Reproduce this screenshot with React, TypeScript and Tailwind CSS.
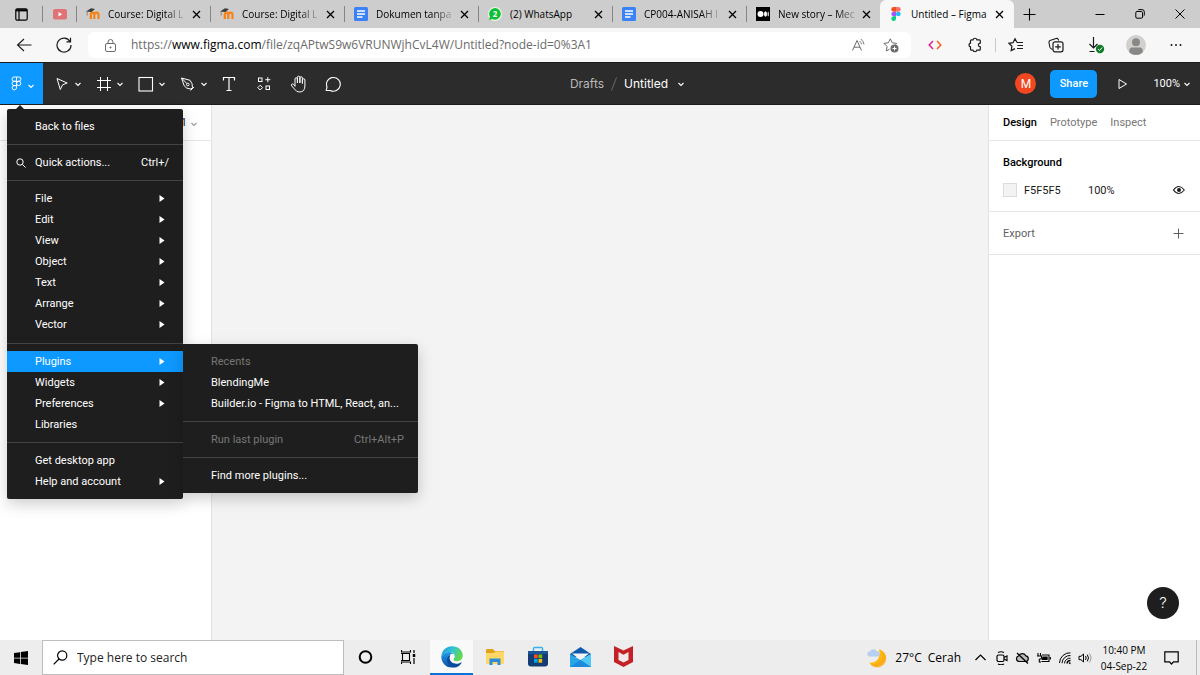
import React from "react";

type IconProps = { w?: number; h?: number; box?: string; className?: string; children: React.ReactNode };

function Icon({ w = 16, h, box, className = "", children }: IconProps) {
  const height = h ?? w;
  return (
    <svg
      width={w}
      height={height}
      viewBox={box ?? `0 0 ${w} ${height}`}
      fill="none"
      stroke="currentColor"
      aria-hidden="true"
      className={`shrink-0 ${className}`}
    >
      {children}
    </svg>
  );
}

const Chevron = ({ className = "" }: { className?: string }) => (
  <Icon w={6} className={className}>
    <path d="M.5 2 3 4.400 5.500 2" strokeWidth="1.100" />
  </Icon>
);

const Close = () => (
  <Icon w={9}>
    <path d="m1 1 7 7M8 1 1 8" strokeWidth="1.300" />
  </Icon>
);

const Moodle = () => (
  <Icon w={14}>
    <path d="M4.800 12V7.800c0-3 3.500-3 3.500 0V12m0-4.200c0-3 4.200-3 4.200 0V12" stroke="#f98012" strokeWidth="2.200" />
    <path d="M0 4.500 5 1.200l4 .8-3.500 3-3-.2z" fill="#3c3c3c" stroke="none" />
    <path d="M1.200 4.500v4" stroke="#8b7355" strokeWidth=".8" />
  </Icon>
);

const Docs = () => (
  <Icon w={14}>
    <rect width="14" height="14" rx="1.500" fill="#3b82f6" stroke="none" />
    <path d="M3 4h8M3 7h8M3 10h5.500" stroke="#fff" strokeWidth="1.400" />
  </Icon>
);

const WhatsApp = () => (
  <Icon w={14}>
    <circle cx="7" cy="7" r="7" fill="#e9f7ea" stroke="none" />
    <path d="M1 13 2 9.800A5.800 5.800 0 1 1 4.300 12z" fill="#0dbf35" stroke="none" />
    <text x="7" y="10" textAnchor="middle" fontSize="8" fontWeight="700" fill="#fff" stroke="none" fontFamily="Open Sans, sans-serif">2</text>
  </Icon>
);

const Medium = () => (
  <Icon w={14} box="0.5 0 14 14">
    <rect width="15" height="14" rx="1" fill="#000" stroke="none" />
    <g fill="#fff" stroke="none">
      <circle cx="5" cy="7" r="3" />
      <ellipse cx="10" cy="7" rx="1.500" ry="2.800" />
      <ellipse cx="12.700" cy="7" rx=".6" ry="2.600" />
    </g>
  </Icon>
);

const FigmaColor = () => (
  <Icon w={10} h={14} box="0 0 10 15">
    <g stroke="none">
      <path d="M5 0H2.500a2.500 2.500 0 0 0 0 5H5z" fill="#f24e1e" />
      <path d="M5 0h2.500a2.500 2.500 0 0 1 0 5H5z" fill="#ff7262" />
      <path d="M5 5H2.500a2.500 2.500 0 0 0 0 5H5z" fill="#a259ff" />
      <circle cx="7.500" cy="7.500" r="2.500" fill="#1abcfe" />
      <path d="M5 10H2.500A2.500 2.500 0 1 0 5 12.500z" fill="#0acf83" />
    </g>
  </Icon>
);

const tabs = [
  { title: "Course: Digital L", icon: <Moodle />, fade: true },
  { title: "Course: Digital L", icon: <Moodle />, fade: true },
  { title: "Dokumen tanpa", icon: <Docs />, fade: true },
  { title: "(2) WhatsApp", icon: <WhatsApp />, fade: false },
  { title: "CP004-ANISAH I", icon: <Docs />, fade: true },
  { title: "New story – Mec", icon: <Medium />, fade: true },
];

function TabStrip() {
  return (
    <div className="flex h-7 shrink-0 bg-[#cdcdcd] text-[10px] text-black">
      <button aria-label="Tab actions" className="flex w-[42px] items-center justify-center">
        <Icon w={13}>
          <rect x=".8" y=".8" width="11.400" height="11.400" rx="1.500" strokeWidth="1.200" />
          <path d="M1 2.300h11" strokeWidth="2.200" />
          <path d="M4 3v9" strokeWidth="1.200" />
        </Icon>
      </button>
      <button aria-label="YouTube" className="my-1.5 flex w-[34px] items-center justify-center border-l border-[#858585]">
        <Icon w={14} h={11}>
          <rect width="14" height="10.500" rx="2" fill="#e07375" stroke="none" />
          <path d="M5.500 3v4.500L9.200 5.200z" fill="#fff" stroke="none" />
        </Icon>
      </button>
      {tabs.map((tab, i) => (
        <div key={i} className="my-1.5 flex w-[134px] items-center border-l border-[#858585] pl-[9px] pr-[9px]">
          {tab.icon}
          <span
            className={`ml-2 whitespace-nowrap ${tab.fade ? "[mask-image:linear-gradient(to_right,#000_calc(100%_-_18px),rgba(0,0,0,0.2))]" : ""}`}
          >
            {tab.title}
          </span>
          <button aria-label={`Close ${tab.title}`} className="ml-auto">
            <Close />
          </button>
        </div>
      ))}
      <div className="flex w-[134px] items-center rounded-t-md bg-[#f7f7f7] pl-[11px] pr-2.5">
        <FigmaColor />
        <span className="ml-2.5 whitespace-nowrap">Untitled – Figma</span>
        <button aria-label="Close Untitled" className="ml-auto">
          <Close />
        </button>
      </div>
      <button aria-label="New tab" className="flex w-[30px] items-center justify-center">
        <Icon w={13}><path d="M6.500.5v12M.5 6.500h12" strokeWidth="1.100" /></Icon>
      </button>
      <div className="ml-auto flex">
        <button aria-label="Minimize" className="flex w-10 items-center justify-center">
          <Icon w={10}><path d="M.5 5.500h9" /></Icon>
        </button>
        <button aria-label="Restore" className="flex w-10 items-center justify-center">
          <Icon w={10}>
            <rect x=".8" y="2.500" width="6.700" height="6.700" rx="1.200" />
            <path d="M3 1.200q.3-.6 1-.6h3q2.300 0 2.300 2.300v3q0 .8-.6 1" />
          </Icon>
        </button>
        <button aria-label="Close window" className="flex w-10 items-center justify-center">
          <Icon w={10}><path d="m.5.5 9 9M9.500.5l-9 9" /></Icon>
        </button>
      </div>
    </div>
  );
}

function AddressBar() {
  const tool = "flex w-10 items-center justify-center";
  return (
    <div className="flex h-[34px] shrink-0 items-center bg-[#f7f7f7] pr-1 text-[#1a1a1a]">
      <button aria-label="Back" className="ml-1 flex w-10 items-center justify-center">
        <Icon><path d="M8 2 1.500 8 8 14M1.500 8H15.500" strokeWidth="1.100" /></Icon>
      </button>
      <button aria-label="Refresh" className="flex w-10 items-center justify-center">
        <Icon><path d="M14 4.500A7 7 0 1 0 15 8M14.500.8v4h-4" strokeWidth="1.200" /></Icon>
      </button>
      <div className="ml-1 flex h-[26px] flex-1 items-center rounded-md bg-white pl-4 pr-3 text-[#6b6b6b]">
        <button aria-label="Site information" className="mr-3.5">
          <Icon w={13}>
            <rect x="1.500" y="4.500" width="10" height="8" rx="1.500" />
            <path d="M4 4.500V3a2.500 2.500 0 0 1 5 0v1.500" />
            <circle cx="6.500" cy="8.500" r=".6" fill="currentColor" />
          </Icon>
        </button>
        <a href="#address" className="flex-1 whitespace-nowrap text-[12px]">
          https://<span className="text-black">www.figma.com</span>/file/zqAPtwS9w6VRUNWjhCvL4W/Untitled?node-id=0%3A1
        </a>
        <button aria-label="Read aloud" className="mr-4">
          <Icon>
            <path d="M1.500 13.500 6 3.500l4.500 10M3 10.200h6" />
            <path d="M8.500 4a5 5 0 0 1 2 3.300M9.800 2a8 8 0 0 1 3.200 5.500" strokeWidth=".9" />
          </Icon>
        </button>
        <button aria-label="Add to favorites">
          <Icon>
            <path d="M6.500 12.200 3.300 14l.8-4.500L1 6.400l4.300-.6L7.300 1.800l2 4 4.400.6-1.200 1.200" />
            <circle cx="11.500" cy="11.500" r="4" fill="currentColor" stroke="none" />
            <path d="M11.500 9.500v4M9.500 11.500h4" stroke="#fff" />
          </Icon>
        </button>
      </div>
      <button aria-label="Code extension" className="ml-1 flex w-10 items-center justify-center">
        <Icon w={14} h={10}>
          <path d="M5 1 1.200 5 5 9" stroke="#e0218a" strokeWidth="1.500" />
          <path d="M9 1l3.800 4L9 9" stroke="#ff5a1f" strokeWidth="1.500" />
        </Icon>
      </button>
      <button aria-label="Extensions" className={tool}>
        <Icon>
          <path d="M6 2.800a2 2 0 0 1 3.900 0h2.400q1 0 1 1v2.300a1.900 1.900 0 0 0 0 3.800v2.300q0 1-1 1H9.900a2 2 0 0 1-3.900 0H4.500q-1 0-1-1V9.900a1.950 1.950 0 0 1 0-3.800V3.800q0-1 1-1z" strokeWidth="1.200" />
        </Icon>
      </button>
      <span className="h-[14px] w-px bg-[#c8c8c8]" />
      <button aria-label="Favorites" className={tool}>
        <Icon>
          <path d="M9 5.500 7 1.800 5 5.700.9 6.300l3 2.900-.7 4.400L7 11.600M9 5.500h6M9.500 8.500H15M9 11.500h6" strokeWidth="1.200" />
        </Icon>
      </button>
      <button aria-label="Collections" className={tool}>
        <Icon>
          <path d="M4.500 12.500 3 11.600Q2 11 1.800 10L1 5.500Q.8 4 2 3.500l6-2q1.500-.4 2.300 1l.4 1" strokeWidth="1.100" />
          <rect x="5" y="4.800" width="10" height="10" rx="2" strokeWidth="1.200" />
          <path d="M10 7v5.600M7.200 9.800h5.600" strokeWidth="1.200" />
        </Icon>
      </button>
      <button aria-label="Downloads" className={tool}>
        <Icon w={18}>
          <path d="M6.500 1v11M2.500 8l4 4 4-4M2.500 15.500h5" strokeWidth="1.200" />
          <circle cx="13" cy="13" r="4.200" fill="#107c28" stroke="none" />
          <path d="m11 13 1.500 1.500 2.700-3" stroke="#fff" />
        </Icon>
      </button>
      <button aria-label="Profile" className={tool}>
        <Icon w={20}>
          <circle cx="10" cy="10" r="10" fill="#d2d0ce" stroke="none" />
          <circle cx="10" cy="7.200" r="4" fill="#8a8886" stroke="none" />
          <path d="M3.300 17.400Q3 12.500 6 12.500h8q3 0 2.700 4.900a10 10 0 0 1-13.400 0" fill="#8a8886" stroke="none" />
        </Icon>
      </button>
      <button aria-label="Settings and more" className={tool}>
        <Icon w={12} h={4}>
          <g fill="currentColor" stroke="none">
            <circle cx="1.500" cy="2" r="1" /><circle cx="6" cy="2" r="1" /><circle cx="10.500" cy="2" r="1" />
          </g>
        </Icon>
      </button>
    </div>
  );
}

const tools = [
  { name: "Move", icon: <Icon><path d="M3 2.500 13.200 7 8.600 8.800 6.300 13.500z" /></Icon> },
  { name: "Frame", icon: <Icon><path d="M4.500 1v14M11.500 1v14M1 4.500h14M1 11.500h14" /></Icon> },
  { name: "Rectangle", icon: <Icon><rect x="1" y="1.500" width="13.500" height="13.500" strokeWidth="1.100" /></Icon> },
  {
    name: "Pen",
    icon: (
      <Icon>
        <path d="M1.500 2 10 4.300q2.800 3.200 2.500 7.200l-1.500 1.600Q6 12.800 4.200 9.800zM1.500 2l5.300 5.500M10.500 14.500l3.500-3.500" />
        <circle cx="7.800" cy="8.500" r="1.300" />
      </Icon>
    ),
  },
];

const singles = [
  { name: "Text", icon: <Icon><path d="M2.500 4.500v-3h11v3M8 1.500v13M5.500 14.500h5" strokeWidth="1.200" /></Icon> },
  {
    name: "Resources",
    icon: (
      <Icon>
        <rect x="2.500" y="2" width="3.500" height="3.500" />
        <path d="M11.800 1.200v5M9.300 3.700h5M4.200 9.200 6.600 11.600 4.200 14 1.800 11.600z" />
        <rect x="10" y="10" width="3.500" height="3.500" />
      </Icon>
    ),
  },
  {
    name: "Hand",
    icon: (
      <Icon w={18}>
        <path d="M5 10V4a1.200 1.200 0 0 1 2.400 0v4V2.400a1.200 1.200 0 0 1 2.500 0V8 3a1.200 1.200 0 0 1 2.500 0v5.500V5a1.200 1.200 0 0 1 2.500 0v6q0 6-5.500 6-3 0-4.500-2.500L1.600 10.800a1.200 1.200 0 0 1 2-1.400L5 11.300z" />
      </Icon>
    ),
  },
  { name: "Comment", icon: <Icon w={17}><path d="M1.200 15.500 2 12A6.900 6.900 0 1 1 5.200 15.500z" strokeWidth="1.100" /></Icon> },
];

function Toolbar() {
  return (
    <header className="grid h-[43px] shrink-0 grid-cols-[1fr_auto_1fr] border-y border-[#1c1c1c] bg-[#2c2c2c] font-[Inter,sans-serif] text-white">
      <div className="flex">
        <button aria-label="Main menu" className="flex w-[43px] items-center justify-center gap-1.5 bg-[#0d99ff] pl-0.5">
          <Icon w={11} h={15}>
            <path d="M5.500 1H3.200a2.150 2.150 0 0 0 0 4.300h2.300zm0 0h2.300a2.150 2.150 0 0 1 0 4.300H5.500zm0 4.300H3.200a2.150 2.150 0 0 0 0 4.300h2.300zm0 4.300H3.200a2.150 2.150 0 1 0 2.300 2.200z" />
            <circle cx="7.700" cy="7.400" r="2.150" />
          </Icon>
          <Chevron className="mt-1" />
        </button>
        {tools.map((t) => (
          <button key={t.name} aria-label={t.name} className="flex w-[42px] items-center gap-[5px] pl-[11px]">
            {t.icon}
            <Chevron />
          </button>
        ))}
        {singles.map((t) => (
          <button key={t.name} aria-label={t.name} className="flex w-[35px] items-center justify-center">
            {t.icon}
          </button>
        ))}
      </div>
      <div className="flex items-center pl-[54px] text-[12px]">
        <a href="#drafts" className="text-[#b8b8b8]">Drafts</a>
        <Icon w={6} h={14} className="mx-[7px] text-[#6a6a6a]"><path d="M5.500.5l-5 13" /></Icon>
        <button className="flex items-center gap-2.5">
          Untitled
          <Chevron />
        </button>
      </div>
      <div className="flex items-center justify-end pr-2.5 font-[Roboto,sans-serif] text-[11px]">
        <span className="flex size-[21px] items-center justify-center rounded-full bg-[#f24822] text-[12px]">M</span>
        <button className="ml-3.5 h-7 w-[47px] rounded-[5px] bg-[#0d99ff] pt-0.5 font-medium">Share</button>
        <button aria-label="Present" className="ml-5">
          <Icon w={12}><path d="M2 1.500v9L9.500 6z" /></Icon>
        </button>
        <button className="ml-6 flex items-center gap-1">
          <span className="pt-0.5">100%</span>
          <Chevron />
        </button>
      </div>
    </header>
  );
}

const Arrow = () => (
  <Icon w={6} h={7} className="-mt-0.5 ml-auto mr-1">
    <path d="M.5 0 5.500 3.500.5 7z" fill="currentColor" stroke="none" />
  </Icon>
);

const row = "flex h-[21px] w-full items-center pt-0.5 pl-7 pr-3.5 text-left whitespace-nowrap";

function MenuRow({ label, arrow = false }: { label: string; arrow?: boolean }) {
  return (
    <li>
      <button className={row}>
        {label}
        {arrow && <Arrow />}
      </button>
    </li>
  );
}

function PluginsMenu() {
  return (
    <div className="absolute -top-[7px] left-full w-[235px] rounded-r-[2px] bg-[#1e1e1e] shadow-[0_5px_15px_rgba(0,0,0,0.2)]">
      <ul className="py-[7px]">
        <li className={`${row} text-[#777777]`}>Recents</li>
        <MenuRow label="BlendingMe" />
        <MenuRow label="Builder.io - Figma to HTML, React, an..." />
      </ul>
      <ul className="border-y border-[#444444] py-[7px] text-[#777777]">
        <li>
          <button disabled className={row}>
            Run last plugin <span className="ml-auto">Ctrl+Alt+P</span>
          </button>
        </li>
      </ul>
      <ul className="py-[7px]">
        <MenuRow label="Find more plugins..." />
      </ul>
    </div>
  );
}

function MainMenu() {
  return (
    <nav className="absolute left-[7px] top-1 z-10 w-44 rounded-[2px] bg-[#1e1e1e] text-[11px] text-white shadow-[0_5px_15px_rgba(0,0,0,0.2)]">
      <Icon w={8} h={4} className="absolute -top-1 left-[9px] text-[#1e1e1e]">
        <path d="M0 4 4 0l4 4z" fill="currentColor" stroke="none" />
      </Icon>
      <ul className="border-b border-[#444444] py-[7px]">
        <MenuRow label="Back to files" />
      </ul>
      <ul className="border-b border-[#444444] py-[7px]">
        <li>
          <button className="flex h-[21px] w-full items-center pl-[9px] pr-3.5 pt-0.5">
            <Icon w={10} className="-mt-0.5 mr-[9px]">
              <circle cx="4" cy="4" r="3.200" /><path d="m6.300 6.300 3.200 3.200" />
            </Icon>
            Quick actions...
            <span className="ml-auto">Ctrl+/</span>
          </button>
        </li>
      </ul>
      <ul className="border-b border-[#444444] pb-2 pt-[7px]">
        {["File", "Edit", "View", "Object", "Text", "Arrange", "Vector"].map((l) => (
          <MenuRow key={l} label={l} arrow />
        ))}
      </ul>
      <ul className="border-b border-[#444444] py-[7px]">
        <li className="relative">
          <button className={`${row} bg-[#0d99ff]`}>
            Plugins
            <Arrow />
          </button>
          <PluginsMenu />
        </li>
        <MenuRow label="Widgets" arrow />
        <MenuRow label="Preferences" arrow />
        <MenuRow label="Libraries" />
      </ul>
      <ul className="py-[7px]">
        <MenuRow label="Get desktop app" />
        <MenuRow label="Help and account" arrow />
      </ul>
    </nav>
  );
}

function Workspace() {
  return (
    <div className="relative flex min-h-0 flex-1 bg-[#f3f3f3] font-[Roboto,sans-serif] text-[11px] text-[#1a1a1a]">
      <aside className="w-[212px] shrink-0 border-r border-[#e2e2e2] bg-white">
        <div className="flex h-9 items-center justify-end border-b border-[#e5e5e5] pr-3.5 pt-0.5">
          <button className="flex items-center gap-1">
            Page 1 <Chevron className="text-[#999999]" />
          </button>
        </div>
      </aside>
      <main className="flex-1" />
      <aside className="w-[212px] shrink-0 border-l border-[#e2e2e2] bg-white">
        <div className="flex h-9 items-center gap-[13px] border-b border-[#e5e5e5] pl-3.5 pt-0.5 text-[#777777]">
          <button className="font-medium text-black">Design</button>
          <button>Prototype</button>
          <button>Inspect</button>
        </div>
        <section className="border-b border-[#e5e5e5] px-3.5 pb-3.5 pt-[13px]">
          <h2 className="h-[18px] font-medium leading-[18px] text-black">Background</h2>
          <div className="mt-[11px] flex items-center">
            <button aria-label="Background color" className="mr-[7px] size-3.5 border border-[#dcdcdc] bg-[#f3f3f3]" />
            <span className="w-16 pt-0.5 leading-3">F5F5F5</span>
            <span className="pt-0.5 leading-3">100%</span>
            <button aria-label="Toggle visibility" className="ml-auto">
              <Icon w={14} h={10}>
                <path d="M1.500 5q5.200-7 10.800 0-5.600 7-10.800 0z" strokeWidth="1.100" />
                <circle cx="7" cy="5" r="2" fill="currentColor" stroke="none" />
              </Icon>
            </button>
          </div>
        </section>
        <section className="flex h-[43px] items-center justify-between border-b border-[#e5e5e5] pl-3.5 pr-4 text-[#5f5f5f]">
          <h2 className="pt-0.5">Export</h2>
          <button aria-label="Add export">
            <Icon w={11}><path d="M5.500.5v10M.5 5.500h10" /></Icon>
          </button>
        </section>
      </aside>
      <MainMenu />
      <button
        aria-label="Help and resources"
        className="absolute bottom-[21px] right-[21px] flex size-8 items-center justify-center rounded-full bg-[#1e1e1e] font-[Inter,sans-serif] text-[15px] font-light text-white"
      >
        ?
      </button>
    </div>
  );
}

const EdgeLogo = () => (
  <Icon w={22}>
    <defs>
      <linearGradient id="edgeTop" x1="0" y1="0" x2="1" y2=".4">
        <stop offset="0" stopColor="#2190d8" /><stop offset=".5" stopColor="#2fc3d8" /><stop offset="1" stopColor="#62d84e" />
      </linearGradient>
      <linearGradient id="edgeSide" x1="0" y1="0" x2="0" y2="1">
        <stop offset="0" stopColor="#1f9ce8" /><stop offset="1" stopColor="#0c4fa8" />
      </linearGradient>
    </defs>
    <g stroke="none">
      <path d="M.3 10.500C.8 4.500 5.300.3 11 .3c6.500 0 10.700 4.200 10.700 9.200 0 3.700-2.700 5.700-5.700 5.700-2.200 0-3.500-.8-3.500-1.700 0-.8 1.200-1.200 1.200-3.200C13.700 8 11.500 6 8.300 6c-3.500 0-6.300 1.500-8 4.500z" fill="url(#edgeTop)" />
      <path d="M.3 10.500C2.500 7 5.200 6 8 6c2 0 3.800.8 4.800 2-3-.8-4.800 1.500-4.800 4.200 0 4.500 4 8 8.500 6.700-1.500 1.600-3.500 2.600-6 2.600C4.500 21.500.3 16.500.3 10.500z" fill="url(#edgeSide)" />
      <path d="M9.300 9q-2 4.500 1.500 7.300c3 2.300 6.700 1.500 9.200.1.500-.2.800.1.500.6-1.200 2.200-3.500 4-6.500 4.500-5-.5-8.500-4.500-8-8.500.3-2 1.500-3.300 3.300-4z" fill="#0b4a9e" />
    </g>
  </Icon>
);

const apps = [
  { name: "Cortana", icon: <Icon><circle cx="7.500" cy="8" r="5.800" strokeWidth="2" /></Icon> },
  {
    name: "Task View",
    icon: (
      <Icon box="1 0 16 16">
        <path d="M2.500 4.500h7v7h-7zM.500 4.500h2M.500 11.500h2M1.500 1v2h9V1M1.500 15v-2h9v2" strokeWidth="1.100" />
        <path d="M14 1v3M14 9v6" strokeWidth="1.200" />
        <path d="M14 5v3" strokeWidth="2.500" />
      </Icon>
    ),
  },
  { name: "Microsoft Edge", icon: <EdgeLogo />, active: true },
  {
    name: "File Explorer",
    icon: (
      <Icon w={20} h={18}>
        <g stroke="none">
          <path d="M1 2q0-1 1-1h6l1.500 2H18q1 0 1 1v11H1z" fill="#e3a21a" />
          <path d="M1 5h8l1.500-1.500H19V15q0 1-1 1H2q-1 0-1-1z" fill="#ffd766" />
          <path d="M4.500 10.500h11V17h-3v-3h-5v3h-3z" fill="#2f8bd8" />
        </g>
      </Icon>
    ),
  },
  {
    name: "Microsoft Store",
    icon: (
      <Icon w={20} h={21}>
        <path d="M5.500 6V2.500q0-1 1-1h7q1 0 1 1V6" stroke="#36b4f0" strokeWidth="1.500" />
        <path d="M0 5h20v12.500q0 3-3 3H3q-3 0-3-3z" fill="#123c73" stroke="none" />
        <path d="M0 5h20v3H0z" fill="#1a5596" stroke="none" />
        <g stroke="none">
          <rect x="6" y="8.500" width="3.700" height="3.700" fill="#f25022" />
          <rect x="10.500" y="8.500" width="3.700" height="3.700" fill="#7fba00" />
          <rect x="6" y="13" width="3.700" height="3.700" fill="#00a4ef" />
          <rect x="10.500" y="13" width="3.700" height="3.700" fill="#ffb900" />
        </g>
      </Icon>
    ),
  },
  {
    name: "Mail",
    icon: (
      <Icon w={21} h={20}>
        <g stroke="none">
          <path d="M0 7 10.500 0 21 7v3H0z" fill="#0f5bab" />
          <path d="M2 6.500h17L10.500 13z" fill="#f4f4f4" />
          <path d="M0 7v13h21V7l-10.500 6z" fill="#2aa5e8" />
          <path d="M21 7v13L10.500 13z" fill="#50c8f5" />
          <path d="M0 20h21L10.500 13z" fill="#1c8bdc" />
        </g>
      </Icon>
    ),
  },
  {
    name: "McAfee",
    icon: (
      <Icon w={19} h={21}>
        <path d="M0 0 9.500 4.500 19 0v16L9.500 21 0 16z" fill="#c42127" stroke="none" />
        <path d="M4.500 6 9.500 8.700 14.500 6v8L9.500 16.500 4.500 14z" fill="#f3e9e9" stroke="none" />
      </Icon>
    ),
  },
];

const tray = [
  {
    name: "Meet Now",
    icon: (
      <Icon w={14}>
        <rect x="2" y="4" width="7" height="6.500" rx="1.500" strokeWidth="1.200" />
        <path d="m9 6.500 3-1.500v4.500L9 8M3 1.500q3-1.500 6 0M3 13q3 1.500 6 0" strokeWidth="1.100" />
      </Icon>
    ),
  },
  {
    name: "OneDrive",
    icon: (
      <Icon w={15} h={14}>
        <path d="M4 10.500a2.800 2.800 0 0 1-.4-5.500 4 4 0 0 1 7.200-.2 2.900 2.900 0 0 1 .2 5.700z" fill="#bcbcbc" strokeWidth="1.200" />
        <path d="m2 2 11 10.500" strokeWidth="1.300" />
      </Icon>
    ),
  },
  {
    name: "Battery",
    icon: (
      <Icon w={15} h={12}>
        <path d="M2 1v3M4.500 1v3M1 4h4.500v2q0 1-2.200 1.300V10H5" strokeWidth="1.100" />
        <path d="M6 3h7v6.500H5.500" strokeWidth="1.100" />
        <path d="M6.500 4.500h5.200V8H5.500z" fill="currentColor" stroke="none" />
        <path d="M14.300 5v2.500" strokeWidth="1.200" />
      </Icon>
    ),
  },
  {
    name: "Network",
    icon: (
      <Icon w={14}>
        <path d="M1.500 12A10.500 10.500 0 0 1 12.500 1.800M4 12.200A8 8 0 0 1 12.500 4.500M6.500 12.400a5.500 5.500 0 0 1 6-5.200" />
        <path d="M9 12.500a3.500 3.500 0 0 1 3.500-3M11 12l1.500 .5" strokeWidth="1.500" />
      </Icon>
    ),
  },
  {
    name: "Volume",
    icon: (
      <Icon w={15} h={12}>
        <path d="M1 4.300h2L5.500 2v8L3 7.700H1z" />
        <path d="M7.500 4q1.300 2 0 4M9.300 2.700q2.400 3.300 0 6.600" />
        <path d="M11.300 1.500q3.400 4.500 0 9" stroke="#999" />
      </Icon>
    ),
  },
];

function Taskbar() {
  return (
    <footer className="flex h-[35px] shrink-0 bg-[#ededed] text-black">
      <button aria-label="Start" className="flex w-[42px] items-center justify-center">
        <Icon w={14}>
          <path d="M0 2 6 1.200v5.500H0zM6.800 1 14 0v6.700H6.800zM0 7.400h6v5.500l-6-.9zM6.800 7.400H14V14l-7.200-1z" fill="currentColor" stroke="none" />
        </Icon>
      </button>
      <label className="flex w-[302px] items-center gap-[9px] border border-[#bdbdbd] bg-white pl-2.5">
        <Icon w={15}>
          <circle cx="9.200" cy="5.500" r="4.600" strokeWidth="1.200" /><path d="m6 9-5.300 5.300" strokeWidth="1.200" />
        </Icon>
        <input
          type="text"
          aria-label="Type here to search"
          placeholder="Type here to search"
          className="min-w-0 flex-1 bg-transparent text-[12px] outline-none placeholder:text-[#222222]"
        />
      </label>
      {apps.map((a) => (
        <button
          key={a.name}
          aria-label={a.name}
          className={`flex w-[43px] items-center justify-center border-b-2 ${a.active ? "border-[#0a74d6] bg-[#f9f9f9]" : "border-transparent"}`}
        >
          {a.icon}
        </button>
      ))}
      <div className="ml-auto flex items-center">
        <button className="flex items-center text-[12px]">
          <Icon w={20}>
            <path d="M12 1.200A9 9 0 1 1 2.200 14.500Q9 15.500 11.800 9.500 13 5.500 12 1.200z" fill="#fdb913" stroke="none" />
            <path d="M15 3a9 9 0 1 1-12 13q8 1.500 11.500-5Q16 7 15 3z" fill="#f79a1c" fillOpacity=".4" stroke="none" />
            <path d="M3 8.500a2.600 2.600 0 0 1 0-5.200 3.800 3.800 0 0 1 6.800 0 2.600 2.600 0 0 1 .7 5.200z" fill="#b7cff0" stroke="none" />
          </Icon>
          <span className="ml-2">27°C</span>
          <span className="ml-1.5">Cerah</span>
        </button>
        <button aria-label="Show hidden icons" className="ml-3.5 mr-[5px]">
          <Icon w={11} h={7}><path d="M.5 6 5.500 1l5 5" strokeWidth="1.200" /></Icon>
        </button>
        {tray.map((t) => (
          <button key={t.name} aria-label={t.name} className="flex w-[21px] items-center justify-center">
            {t.icon}
          </button>
        ))}
        <button className="w-14 text-center text-[10px] leading-4">
          10:40 PM
          <br />
          04-Sep-22
        </button>
        <button aria-label="Notifications" className="ml-3 mr-[17px]">
          <Icon w={15} h={14}><path d="M.8.8h13.400v10H9.500L7.500 13l-2-2.200H.8z" strokeWidth="1.200" /></Icon>
        </button>
        <span className="mr-[3px] h-[35px] w-px bg-[#bbbbbb]" />
      </div>
    </footer>
  );
}

export default function App() {
  return (
    <div className="flex h-screen min-h-[520px] flex-col overflow-hidden font-['Open_Sans','Noto_Sans',sans-serif]">
      <TabStrip />
      <AddressBar />
      <Toolbar />
      <Workspace />
      <Taskbar />
    </div>
  );
}
